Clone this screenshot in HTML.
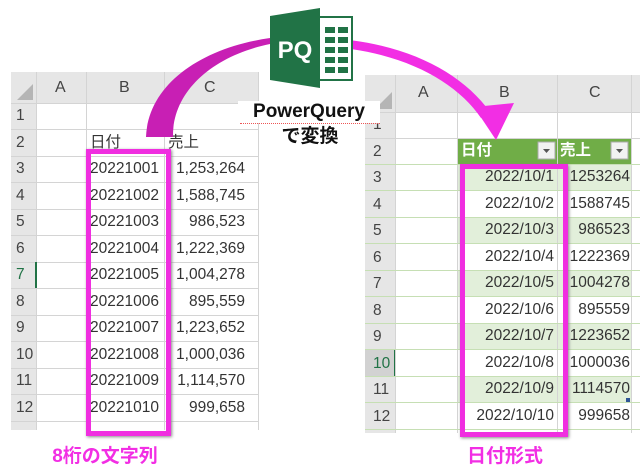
<!DOCTYPE html>
<html><head><meta charset="utf-8"><style>
body{margin:0;width:640px;height:475px;background:#fff;position:relative;overflow:hidden;font-family:"Liberation Sans","Noto Sans CJK JP",sans-serif}
.a{position:absolute}
.c{position:absolute;font-size:15.5px;color:#333;line-height:26.5px;white-space:nowrap}
</style></head><body>

<!-- left sheet -->
<div class="a" style="left:11px;top:72px;width:248px;height:358px;background:#fff;overflow:hidden">
<svg class="a" style="left:0;top:0" width="248" height="358">
<rect x="0" y="0" width="248" height="31" fill="#e6e6e6"/>
<rect x="0" y="0" width="25" height="358" fill="#e6e6e6"/>
<polygon points="22,28 22,12 6,28" fill="#b5b5b5"/>
<g stroke="#d4d4d4" stroke-width="1">
<line x1="75.5" y1="0" x2="75.5" y2="358"/><line x1="153.5" y1="0" x2="153.5" y2="358"/><line x1="25.5" y1="0" x2="25.5" y2="358"/><line x1="247.5" y1="0" x2="247.5" y2="358"/>
<line x1="0" y1="31.5" x2="248" y2="31.5"/>
<line x1="0" y1="57.5" x2="248" y2="57.5"/><line x1="0" y1="84.5" x2="248" y2="84.5"/><line x1="0" y1="110.5" x2="248" y2="110.5"/><line x1="0" y1="137.5" x2="248" y2="137.5"/><line x1="0" y1="163.5" x2="248" y2="163.5"/><line x1="0" y1="190.5" x2="248" y2="190.5"/><line x1="0" y1="216.5" x2="248" y2="216.5"/><line x1="0" y1="243.5" x2="248" y2="243.5"/><line x1="0" y1="269.5" x2="248" y2="269.5"/><line x1="0" y1="296.5" x2="248" y2="296.5"/><line x1="0" y1="322.5" x2="248" y2="322.5"/><line x1="0" y1="349.5" x2="248" y2="349.5"/>
</g>
<line x1="25" y1="190" x2="25" y2="216" stroke="#217346" stroke-width="2"/>
</svg>
<div class="c" style="left:44px;top:3px;font-size:16px;color:#444">A</div>
<div class="c" style="left:108px;top:3px;font-size:16px;color:#444">B</div>
<div class="c" style="left:193px;top:3px;font-size:16px;color:#444">C</div>
<div class="c" style="left:5px;top:31px;color:#444">1<br>2<br>3<br>4<br>5<br>6<br><span style="color:#217346">7</span><br>8<br>9<br>10<br>11<br>12</div>
<div class="c" style="left:79px;top:58px">日付</div>
<div class="c" style="left:157px;top:58px">売上</div>
<div class="c" style="left:79px;top:84px;">20221001<br>20221002<br>20221003<br>20221004<br>20221005<br>20221006<br>20221007<br>20221008<br>20221009<br>20221010</div>
<div class="c" style="right:14px;top:84px;text-align:right">1,253,264<br>1,588,745<br>986,523<br>1,222,369<br>1,004,278<br>895,559<br>1,223,652<br>1,000,036<br>1,114,570<br>999,658</div>
</div>
<div class="a" style="left:86px;top:149px;width:75px;height:277px;border:5px solid #f02ee0;box-shadow:1px 1px 3px #888"></div>

<!-- right sheet -->
<div class="a" style="left:365px;top:75px;width:275px;height:358px;background:#fff;overflow:hidden">
<svg class="a" style="left:0;top:0" width="275" height="358">
<rect x="0" y="0" width="275" height="37" fill="#e6e6e6"/>
<rect x="0" y="0" width="30" height="358" fill="#e6e6e6"/>
<polygon points="27,34 27,17 10,34" fill="#b5b5b5"/>
<rect x="92" y="63" width="174" height="26" fill="#70ad47"/>
<g fill="#e2efda"><rect x="92" y="89" width="174" height="26.5"/><rect x="92" y="142" width="174" height="26.5"/><rect x="92" y="195" width="174" height="26.5"/><rect x="92" y="248" width="174" height="26.5"/><rect x="92" y="301" width="174" height="26.5"/></g>
<rect x="0" y="275" width="30" height="26" fill="#d2d2d2"/>
<line x1="30" y1="275" x2="30" y2="301" stroke="#217346" stroke-width="2"/>
<g stroke="#d4d4d4" stroke-width="1">
<line x1="30.5" y1="0" x2="30.5" y2="358"/><line x1="92.5" y1="0" x2="92.5" y2="358"/><line x1="192.5" y1="0" x2="192.5" y2="358"/><line x1="266.5" y1="0" x2="266.5" y2="358"/>
<line x1="0" y1="37.5" x2="275" y2="37.5"/><line x1="0" y1="63.5" x2="275" y2="63.5"/>
</g>
<g stroke="#c6dfb4" stroke-width="1">
<line x1="0" y1="89.5" x2="275" y2="89.5"/><line x1="0" y1="115.5" x2="275" y2="115.5"/><line x1="0" y1="142.5" x2="275" y2="142.5"/><line x1="0" y1="168.5" x2="275" y2="168.5"/><line x1="0" y1="195.5" x2="275" y2="195.5"/><line x1="0" y1="221.5" x2="275" y2="221.5"/><line x1="0" y1="248.5" x2="275" y2="248.5"/><line x1="0" y1="274.5" x2="275" y2="274.5"/><line x1="0" y1="301.5" x2="275" y2="301.5"/><line x1="0" y1="327.5" x2="275" y2="327.5"/><line x1="0" y1="354.5" x2="275" y2="354.5"/>
</g>
<rect x="173" y="67" width="17" height="17" fill="#f2f2f2" stroke="#aaa"/><polygon points="178,74 185,74 181.5,78" fill="#555"/>
<rect x="246" y="67" width="17" height="17" fill="#f2f2f2" stroke="#aaa"/><polygon points="251,74 258,74 254.5,78" fill="#555"/>
<rect x="261" y="323" width="4" height="4" fill="#2f5597"/>
</svg>
<div class="c" style="left:53px;top:5px;font-size:16px;color:#444">A</div>
<div class="c" style="left:134px;top:5px;font-size:16px;color:#444">B</div>
<div class="c" style="left:224px;top:5px;font-size:16px;color:#444">C</div>
<div class="c" style="left:8px;top:37px;color:#444">1<br>2<br>3<br>4<br>5<br>6<br>7<br>8<br>9<br><span style="color:#217346">10</span><br>11<br>12</div>
<div class="c" style="left:96px;top:63px;color:#fff;font-weight:bold">日付</div>
<div class="c" style="left:195px;top:63px;color:#fff;font-weight:bold">売上</div>
<div class="c" style="right:86px;top:89px;text-align:right">2022/10/1<br>2022/10/2<br>2022/10/3<br>2022/10/4<br>2022/10/5<br>2022/10/6<br>2022/10/7<br>2022/10/8<br>2022/10/9<br>2022/10/10</div>
<div class="c" style="right:10px;top:89px;text-align:right">1253264<br>1588745<br>986523<br>1222369<br>1004278<br>895559<br>1223652<br>1000036<br>1114570<br>999658</div>
</div>
<div class="a" style="left:460px;top:164px;width:98px;height:263px;border:5px solid #f02ee0;box-shadow:1px 1px 3px #888"></div>

<!-- arrows -->
<svg class="a" style="left:0;top:0" width="640" height="160">
<path d="M146,137 C148,85 200,48 270,38 L270,44 C212,56 172,92 173,137 Z" fill="#c81fb4"/>
<path d="M320,38 C400,40 460,70 490,112 L481,118 C455,80 400,50 320,46 Z" fill="#f22ee4"/>
<polygon points="474,107 514,103 496,140" fill="#f22ee4"/>
</svg>

<!-- PQ icon -->
<svg class="a" style="left:268px;top:6px" width="90" height="86">
<rect x="49" y="11" width="35" height="63" fill="#fff" stroke="#217346" stroke-width="2"/>
<g fill="#217346"><rect x="57" y="21" width="10" height="6"/><rect x="70" y="21" width="10" height="6"/><rect x="57" y="31" width="10" height="6"/><rect x="70" y="31" width="10" height="6"/><rect x="57" y="41" width="10" height="6"/><rect x="70" y="41" width="10" height="6"/><rect x="57" y="51" width="10" height="6"/><rect x="70" y="51" width="10" height="6"/><rect x="57" y="61" width="10" height="6"/><rect x="70" y="61" width="10" height="6"/></g>
<polygon points="2,10 52,2 52,82 2,74" fill="#217346"/>
<text x="27" y="52" font-family="Liberation Sans" font-weight="bold" font-size="24" fill="#fff" text-anchor="middle">PQ</text>
</svg>

<div class="a" style="left:238px;top:101px;width:142px;text-align:center;font-weight:bold;font-size:19px;color:#111;line-height:22px;background:#fff">PowerQuery</div>
<div class="a" style="left:240px;top:121px;width:140px;height:2px;border-bottom:1px dotted #e55"></div>
<div class="a" style="left:250px;top:125px;width:120px;text-align:center;font-weight:bold;font-size:19px;color:#111;line-height:24px">で変換</div>

<div class="a" style="left:50px;top:441px;width:110px;text-align:center;font-weight:bold;font-size:19px;color:#f22ee4">8桁の文字列</div>
<div class="a" style="left:450px;top:441px;width:110px;text-align:center;font-weight:bold;font-size:19px;color:#f22ee4">日付形式</div>
</body></html>
